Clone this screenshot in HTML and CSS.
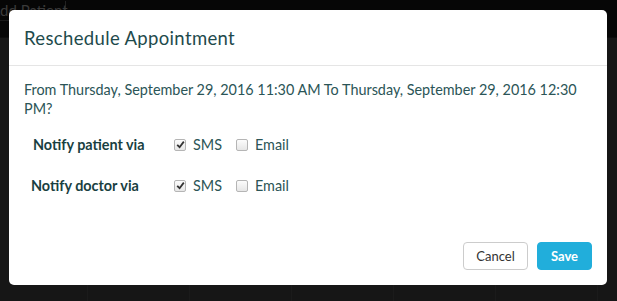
FILE: index.html
```html
<!DOCTYPE html>
<html lang="en">

<head>
    <meta charset="UTF-8">
    <title>Reschedule Appointment</title>
    <link rel="stylesheet" href="styles.css">
</head>

<body>
    <div class="app">
        <div class="topbar">
            <span class="tab">Add Patient</span>
        </div>
        <div class="calendar">
            <div class="col"></div>
            <div class="col"></div>
            <div class="col"></div>
            <div class="col"></div>
            <div class="col"></div>
            <div class="col"></div>
        </div>
    </div>

    <div class="modal">
        <div class="modal-header">
            <h4>Reschedule Appointment</h4>
        </div>
        <div class="modal-body">
            <p class="message">From Thursday, September 29, 2016 11:30 AM To Thursday, September 29, 2016 12:30 PM?</p>
            <div class="row">
                <span class="label patient">Notify patient via</span>
                <label class="check"><span class="box checked"><svg width="9" height="9" viewBox="0 0 9 9"><path d="M1.2 4.8 L3.6 7.2 L7.8 1.6" fill="none" stroke="#333" stroke-width="1.8"/></svg></span>SMS</label>
                <label class="check"><span class="box"></span>Email</label>
            </div>
            <div class="row">
                <span class="label doctor">Notify doctor via</span>
                <label class="check"><span class="box checked"><svg width="9" height="9" viewBox="0 0 9 9"><path d="M1.2 4.8 L3.6 7.2 L7.8 1.6" fill="none" stroke="#333" stroke-width="1.8"/></svg></span>SMS</label>
                <label class="check"><span class="box"></span>Email</label>
            </div>
        </div>
        <div class="modal-footer">
            <button class="btn cancel">Cancel</button>
            <button class="btn save">Save</button>
        </div>
    </div>
</body>

</html>
```

FILE: styles.css
```css
* {
    padding: 0;
    margin: 0;
    box-sizing: border-box;
}

body {
    width: 617px;
    height: 301px;
    overflow: hidden;
    background: #161616;
    font-family: Lato, "Noto Sans", sans-serif;
    position: relative;
}

.app .topbar {
    height: 38px;
    background: #060606;
    border-bottom: 1px solid #0c0c0c;
}

.app .tab {
    display: inline-block;
    height: 20px;
    margin-left: -10px;
    width: 76px;
    border-right: 1px solid #222;
    border-bottom: 1px solid #1a1a1a;
    color: #3a3a3a;
    font-size: 15px;
    line-height: 18px;
    white-space: nowrap;
}

.app .calendar {
    display: flex;
    height: 263px;
}

.app .calendar .col {
    width: 102px;
    border-right: 1px solid #1b1b1b;
}

.app .calendar .col:first-child {
    width: 88px;
}

.modal {
    position: absolute;
    left: 9px;
    top: 10px;
    width: 598px;
    height: 275px;
    background: #fff;
    border-radius: 5px;
    color: #1f4a4c;
}

.modal-header {
    height: 56px;
    padding: 18px 15px 0;
    border-bottom: 1px solid #e5e5e5;
}

.modal-header h4 {
    font-size: 18.5px;
    font-weight: normal;
    line-height: 20px;
    color: #1e4a4c;
    letter-spacing: 0.35px;
}

.modal-body {
    height: 161px;
    padding: 14px 15px 0;
}

.modal-body .message {
    font-size: 14.4px;
    line-height: 19px;
    color: #2b5557;
}

.modal-body .row {
    display: flex;
    align-items: center;
    height: 33px;
    margin-bottom: 8px;
    font-size: 14.4px;
}

.modal-body .row:first-of-type {
    margin-top: 10px;
}

.modal-body .label {
    font-weight: bold;
    color: #193f41;
    width: 150px;
}

.modal-body .label.patient {
    padding-left: 9px;
}

.modal-body .label.doctor {
    padding-left: 7px;
}

.modal-body .check {
    display: flex;
    align-items: center;
    color: #2b5557;
    margin-right: 14px;
}

.modal-body .box {
    display: inline-flex;
    align-items: center;
    justify-content: center;
    width: 12px;
    height: 12px;
    margin-right: 7px;
    border: 1px solid #b5b5b5;
    border-radius: 2px;
    background: linear-gradient(#fcfcfc, #e6e6e6);
}

.modal-footer {
    display: flex;
    justify-content: flex-end;
    padding: 15px 15px 0;
}

.btn {
    height: 28px;
    border-radius: 4px;
    font-family: Lato, "Noto Sans", sans-serif;
    font-size: 13px;
    cursor: pointer;
}

.btn.cancel {
    width: 65px;
    background: #fff;
    border: 1px solid #ccc;
    color: #333;
    margin-right: 9px;
}

.btn.save {
    width: 55px;
    background: #21aedb;
    border: 1px solid #21aedb;
    color: #fff;
    font-weight: bold;
}
```
